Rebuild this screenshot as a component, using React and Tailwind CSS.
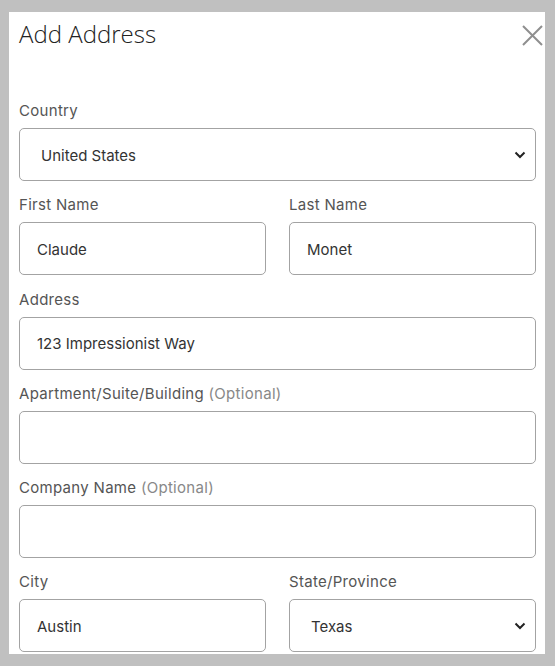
import React from "react";

const labelFont = { fontFamily: "Inter, 'Noto Sans', sans-serif" };

function Label({ children, optional }) {
	return (
		<label className="block text-[15px] tracking-[0.3px] leading-[20px] pt-[1px] text-[#555] mb-[7px]">
			{children}
			{optional ? <span className="text-[#888]"> (Optional)</span> : null}
		</label>
	);
}

function TextInput({ value }) {
	return (
		<div className="h-[53px] border border-[#a3a3a3] rounded-[5px] flex items-center pl-[17px] pt-[3px] text-[15px] text-[#333]">
			{value}
		</div>
	);
}

function SelectBox({ value }) {
	return (
		<div className="h-[53px] border border-[#a3a3a3] rounded-[5px] flex items-center justify-between pl-[21px] pr-[9px] text-[15px] text-[#333]">
			<span className="pt-[3px]">{value}</span>
			<svg width="12" height="8" viewBox="0 0 12 8" fill="none">
				<path d="M1.5 1.5L6 6L10.5 1.5" stroke="#222" strokeWidth="2" />
			</svg>
		</div>
	);
}

function Field({ label, optional, children }) {
	return (
		<div className="mb-[13.25px]">
			<Label optional={optional}>{label}</Label>
			{children}
		</div>
	);
}

export default function App() {
	return (
		<div className="w-[555px] h-[666px] bg-[#c0c0c0] pt-[12px] pl-[9px] overflow-hidden">
			<div className="w-[536px] h-[642px] overflow-hidden bg-white pl-[10px] pr-[9px]" style={labelFont}>
				<div className="flex items-start justify-between h-[88px]">
					<h2
						className="mt-[6px] text-[24px] font-light text-[#222] leading-[32px]"
						style={{ fontFamily: "'Open Sans', sans-serif" }}>
						Add Address
					</h2>
					<button type="button" className="mt-[13px] mr-[-7px]">
						<svg width="21" height="21" viewBox="0 0 21 21">
							<path d="M1 1L20 20M20 1L1 20" stroke="#8f8f8f" strokeWidth="2" />
						</svg>
					</button>
				</div>

				<Field label="Country">
					<SelectBox value="United States" />
				</Field>

				<div className="grid grid-cols-2 gap-x-[23px]">
					<Field label="First Name">
						<TextInput value="Claude" />
					</Field>
					<Field label="Last Name">
						<TextInput value="Monet" />
					</Field>
				</div>

				<Field label="Address">
					<TextInput value="123 Impressionist Way" />
				</Field>

				<Field label="Apartment/Suite/Building" optional>
					<TextInput value="" />
				</Field>

				<Field label="Company Name" optional>
					<TextInput value="" />
				</Field>

				<div className="grid grid-cols-2 gap-x-[23px]">
					<Field label="City">
						<TextInput value="Austin" />
					</Field>
					<Field label="State/Province">
						<SelectBox value="Texas" />
					</Field>
				</div>
			</div>
		</div>
	);
}
